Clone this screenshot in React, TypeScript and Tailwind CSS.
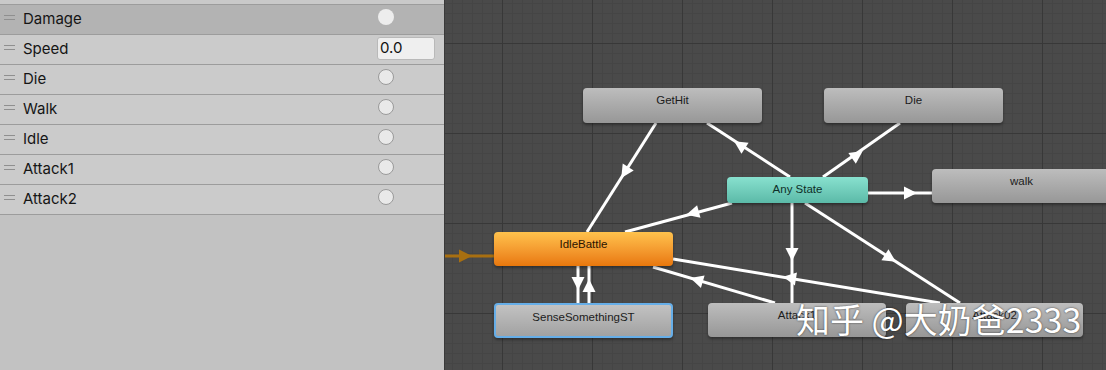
import React from 'react'

// Animator window: parameter list on the left, state machine graph on the right.

type Param = { name: string; kind: 'bool' | 'float'; value?: string; selected?: boolean }

const PARAMS: Param[] = [
  { name: 'Damage', kind: 'bool', selected: true },
  { name: 'Speed', kind: 'float', value: '0.0' },
  { name: 'Die', kind: 'bool' },
  { name: 'Walk', kind: 'bool' },
  { name: 'Idle', kind: 'bool' },
  { name: 'Attack1', kind: 'bool' },
  { name: 'Attack2', kind: 'bool' },
]

const TONES = {
  gray: 'bg-gradient-to-b from-[#bdbdbd] to-[#979797] text-[#1c1c1c]',
  any: 'bg-gradient-to-b from-[#88e1cf] to-[#5bbaa8] text-[#0f2f29]',
  entry: 'bg-gradient-to-b from-[#ffc24c] to-[#e8770a] text-[#2a1400]',
  selected:
    'bg-gradient-to-b from-[#c2c2c2] to-[#a2a2a2] text-[#1c1c1c] border-2 border-[#66aee8] shadow-[0_0_5px_#5fa9e6]',
}

const STATES: { label: string; box: string; tone: keyof typeof TONES }[] = [
  { label: 'GetHit', box: 'left-[138px] top-[88px] w-[179px] h-[35px]', tone: 'gray' },
  { label: 'Die', box: 'left-[379px] top-[88px] w-[179px] h-[35px]', tone: 'gray' },
  { label: 'Any State', box: 'left-[282px] top-[177px] w-[141px] h-[26px]', tone: 'any' },
  { label: 'walk', box: 'left-[487px] top-[169px] w-[179px] h-[34px]', tone: 'gray' },
  { label: 'IdleBattle', box: 'left-[49px] top-[232px] w-[179px] h-[34px]', tone: 'entry' },
  { label: 'SenseSomethingST', box: 'left-[49px] top-[303px] w-[179px] h-[35px]', tone: 'selected' },
  { label: 'Attack1', box: 'left-[263px] top-[303px] w-[178px] h-[34px]', tone: 'gray' },
  { label: 'Attack02', box: 'left-[461px] top-[303px] w-[177px] h-[34px]', tone: 'gray' },
]

// from -> to, arrow drawn at `at` pointing toward `to`
const EDGES: { from: [number, number]; to: [number, number]; at: [number, number]; color?: string }[] = [
  { from: [211, 123], to: [142, 232], at: [180, 172] },
  { from: [345, 177], to: [262, 123], at: [295, 145] },
  { from: [378, 177], to: [455, 123], at: [412, 155] },
  { from: [423, 193], to: [487, 193], at: [465, 193] },
  { from: [287, 203], to: [180, 232], at: [248, 213] },
  { from: [347, 203], to: [347, 303], at: [347, 254] },
  { from: [360, 203], to: [515, 303], at: [445, 258] },
  { from: [495, 303], to: [228, 259], at: [345, 278] },
  { from: [330, 303], to: [208, 267], at: [252, 280] },
  { from: [133, 266], to: [133, 303], at: [133, 283] },
  { from: [144, 303], to: [144, 266], at: [144, 286] },
  { from: [0, 256], to: [49, 256], at: [20, 256], color: '#a86f10' },
]

function Toggle({ light }: { light?: boolean }) {
  return (
    <span
      className={
        light
          ? 'ml-auto mr-[50px] -mt-[5px] h-4 w-4 rounded-full bg-[#ededed]'
          : 'ml-auto mr-[50px] -mt-[5px] h-4 w-4 rounded-full border border-[#9a9a9a] bg-[#e9e9e9]'
      }
    />
  )
}

function ParamRow({ p }: { p: Param }) {
  return (
    <div
      className={`flex h-[30px] items-center border-b border-[#9c9c9c] ${
        p.selected ? 'bg-[#b3b3b3]' : 'bg-[#cbcbcb]'
      }`}
    >
      <span className="ml-1 -mt-[4px] flex w-[11px] flex-col gap-[3px]">
        <span className="h-px bg-[#8f8f8f]" />
        <span className="h-px bg-[#8f8f8f]" />
      </span>
      <span className="ml-2 text-[15px] text-[#151515]">{p.name}</span>
      {p.kind === 'float' ? (
        <span className="ml-auto mr-[9px] -mt-[2px] flex h-[23px] w-[58px] items-center rounded-[3px] border border-[#b9b9b9] bg-[#efefef] pl-[2px] text-[15px] text-[#111]">
          {p.value}
        </span>
      ) : (
        <Toggle light={p.selected} />
      )}
    </div>
  )
}

function Graph() {
  return (
    <div className="relative flex-1 overflow-hidden bg-[#4a4a4a] [background-image:linear-gradient(to_right,#383838_1px,transparent_1px),linear-gradient(to_bottom,#383838_1px,transparent_1px),linear-gradient(to_right,#454545_1px,transparent_1px),linear-gradient(to_bottom,#454545_1px,transparent_1px)] [background-size:90px_90px,90px_90px,10px_10px,10px_10px] [background-position:57px_43px,57px_43px,7px_3px,7px_3px]">
      <svg className="absolute inset-0 h-full w-full" width="661" height="370">
        {EDGES.map((e, i) => {
          const color = e.color ?? '#ffffff'
          const angle = (Math.atan2(e.to[1] - e.from[1], e.to[0] - e.from[0]) * 180) / Math.PI
          return (
            <g key={i}>
              <line x1={e.from[0]} y1={e.from[1]} x2={e.to[0]} y2={e.to[1]} stroke={color} strokeWidth={3} />
              <polygon
                points="7,0 -6,-6.5 -6,6.5"
                fill={color}
                transform={`translate(${e.at[0]} ${e.at[1]}) rotate(${angle})`}
              />
            </g>
          )
        })}
      </svg>
      {STATES.map((s) => (
        <div
          key={s.label}
          className={`absolute ${s.box} ${TONES[s.tone]} rounded-[4px] pt-[5px] text-center font-['Liberation_Sans',sans-serif] text-[11.5px] leading-[14px] shadow-[0_2px_3px_rgba(0,0,0,0.35)]`}
        >
          {s.label}
        </div>
      ))}
    </div>
  )
}

export default function App() {
  return (
    <div className="relative flex h-[370px] w-[1106px] overflow-hidden font-[Inter,sans-serif]">
      <div className="w-[445px] shrink-0 border-r border-[#3a3a3a] bg-[#c2c2c2]">
        <div className="h-[5px] border-b border-[#9c9c9c] bg-[#c9c9c9]" />
        {PARAMS.map((p) => (
          <ParamRow key={p.name} p={p} />
        ))}
      </div>
      <Graph />
      <div className="pointer-events-none absolute left-[796px] top-[302px] whitespace-nowrap font-['Noto_Sans_CJK_SC',sans-serif] text-[34px] leading-none text-white [text-shadow:0_0_2px_rgba(0,0,0,0.7)]">
        知乎 @大奶爸2333
      </div>
    </div>
  )
}
